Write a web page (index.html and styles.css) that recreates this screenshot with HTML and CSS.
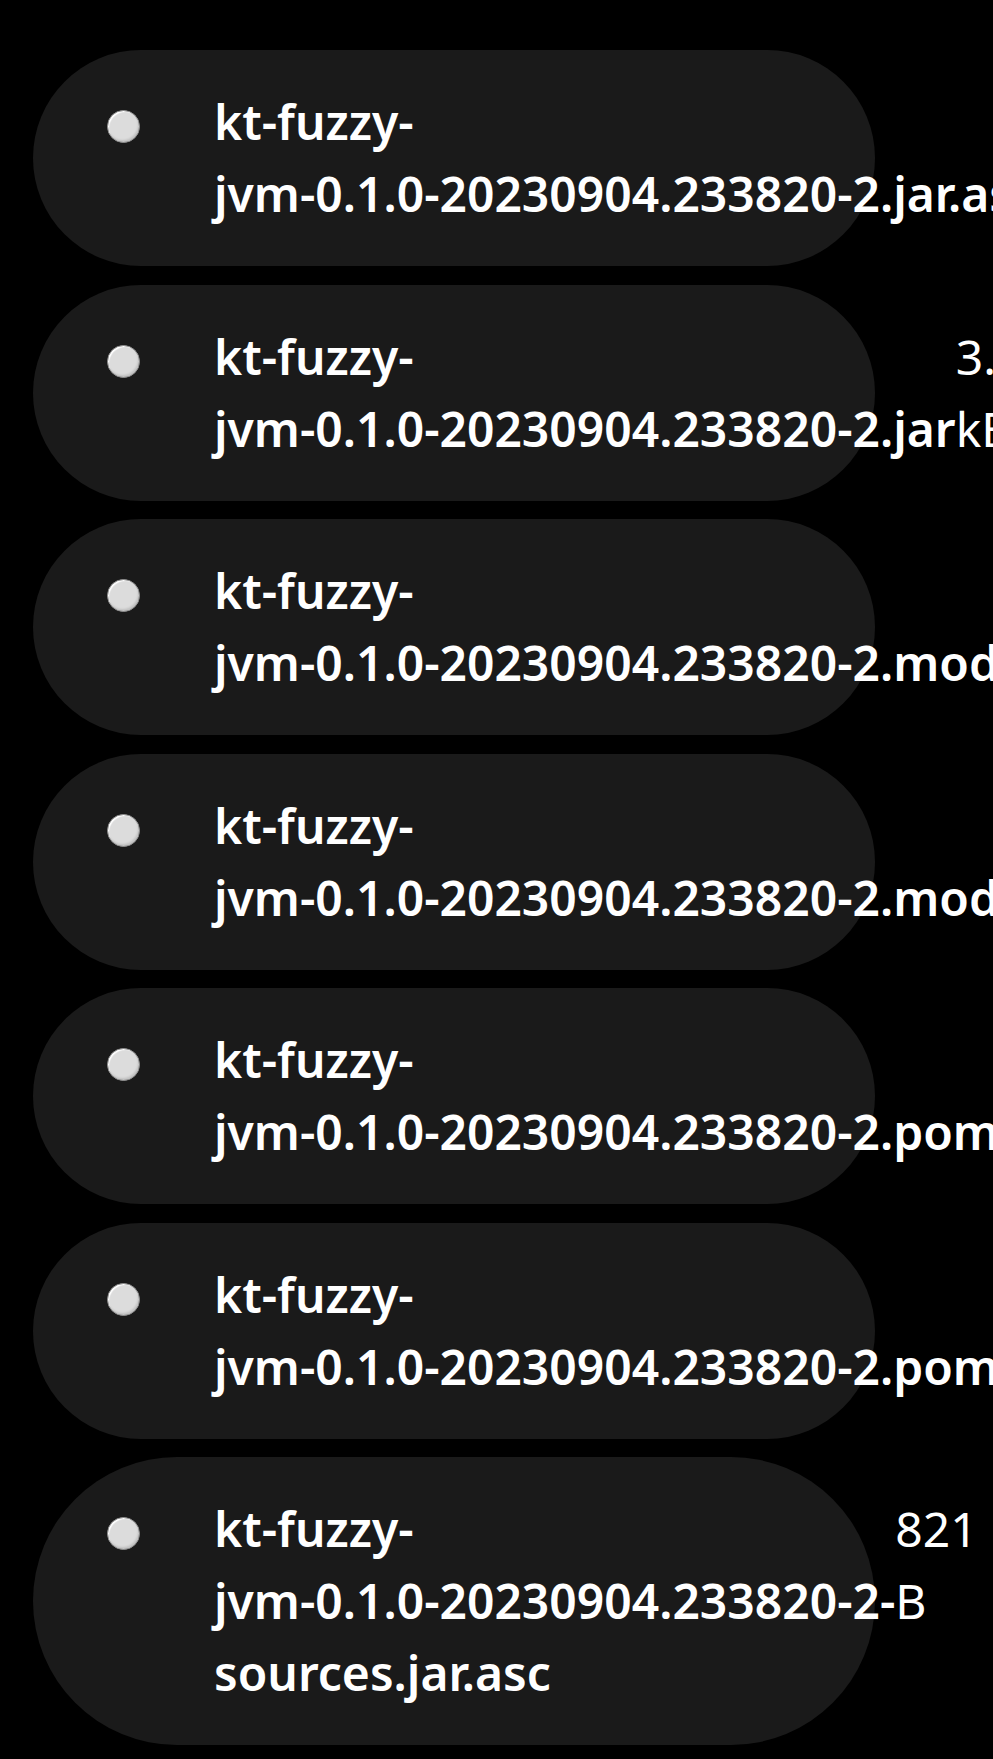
FILE: index.html
```html
<!DOCTYPE html>
<html lang="en">
<head>
<meta charset="utf-8">
<title>Files</title>
<link rel="stylesheet" href="styles.css">
</head>
<body>
<div class="page">
  <ul class="files">
    <li class="file"><span class="bullet"></span><span class="name">kt-fuzzy-<span class="chunk">jvm-0.1.0-20230904.233820-2.jar.asc</span></span><span class="size">833 B</span></li>
    <li class="file"><span class="bullet"></span><span class="name">kt-fuzzy-<span class="chunk">jvm-0.1.0-20230904.233820-2.jar</span></span><span class="size">3.58 kB</span></li>
    <li class="file"><span class="bullet"></span><span class="name">kt-fuzzy-<span class="chunk">jvm-0.1.0-20230904.233820-2.module</span></span><span class="size">2.93 kB</span></li>
    <li class="file"><span class="bullet"></span><span class="name">kt-fuzzy-<span class="chunk">jvm-0.1.0-20230904.233820-2.module.asc</span></span><span class="size">833 B</span></li>
    <li class="file"><span class="bullet"></span><span class="name">kt-fuzzy-<span class="chunk">jvm-0.1.0-20230904.233820-2.pom</span></span><span class="size">1.71 kB</span></li>
    <li class="file"><span class="bullet"></span><span class="name">kt-fuzzy-<span class="chunk">jvm-0.1.0-20230904.233820-2.pom.asc</span></span><span class="size">833 B</span></li>
    <li class="file"><span class="bullet"></span><span class="name">kt-fuzzy-<span class="chunk">jvm-0.1.0-20230904.233820-2-</span>sources.jar.asc</span><span class="size">821 B</span></li>
  </ul>
</div>
</body>
</html>
```

FILE: styles.css
```css
html, body {
  margin: 0;
  padding: 0;
  background: #000;
}

.page {
  width: 993px;
  overflow: hidden;
}

.files {
  list-style: none;
  margin: 0;
  padding: 50px 0 0 33px;
  display: flex;
  flex-direction: column;
  gap: 18.5px;
  font-family: "Noto Sans", "Open Sans", sans-serif;
  font-size: 48px;
  line-height: 72px;
  color: #fff;
}

.file {
  box-sizing: border-box;
  width: 842px;
  display: flex;
  align-items: flex-start;
  background: #1a1a1a;
  border-radius: 9999px;
  padding: 36px 0 36px 74px;
}

.bullet {
  flex: 0 0 auto;
  box-sizing: border-box;
  width: 33px;
  height: 33px;
  margin: 24px 74px 0 0;
  border-radius: 50%;
  background: #dcdcdc;
  border: 1px solid #8e8e8e;
  box-shadow: inset 2px 2px 1px -1px #ffffff, inset -1px -2px 2px rgba(0, 0, 0, 0.12);
}

.name {
  font-weight: 600;
}

.chunk {
  white-space: nowrap;
}

.size {
  font-weight: 400;
}
```
